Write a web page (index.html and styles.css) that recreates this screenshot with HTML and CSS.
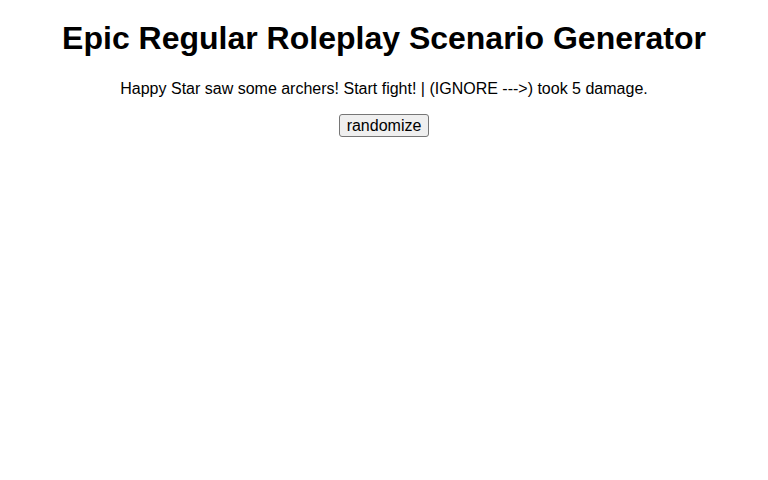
FILE: index.html
```html
<!DOCTYPE html>
<html>
<head>
<meta charset="utf-8">
<link rel="stylesheet" href="styles.css">
</head>
<body>
<main class="page">
  <h1 class="title">Epic Regular Roleplay Scenario Generator</h1>
  <p class="scenario">Happy Star saw some archers! Start fight! | (IGNORE ---&gt;) took 5 damage.</p>
  <div class="actions">
    <button class="btn" type="button">randomize</button>
  </div>
</main>
</body>
</html>
```

FILE: styles.css
```css
html, body {
  margin: 0;
  padding: 0;
  background: #ffffff;
}
body {
  padding: 8px;
  font-family: "Liberation Sans", Arial, sans-serif;
  color: #000000;
}
.page {
  text-align: center;
}
.title {
  font-size: 32px;
  font-weight: bold;
  margin: 11.5px 0 23.5px 0;
  line-height: 37px;
}
.scenario {
  font-size: 16px;
  line-height: 18px;
  margin: 0 0 16px 0;
}
.actions {
  display: flex;
  justify-content: center;
}
.btn {
  font-family: "Liberation Sans", Arial, sans-serif;
  font-size: 16px;
  line-height: 19px;
  padding: 1px 7px;
  border: 1px solid #767676;
  border-radius: 3px;
  background: #efefef;
  color: #000000;
}
```
